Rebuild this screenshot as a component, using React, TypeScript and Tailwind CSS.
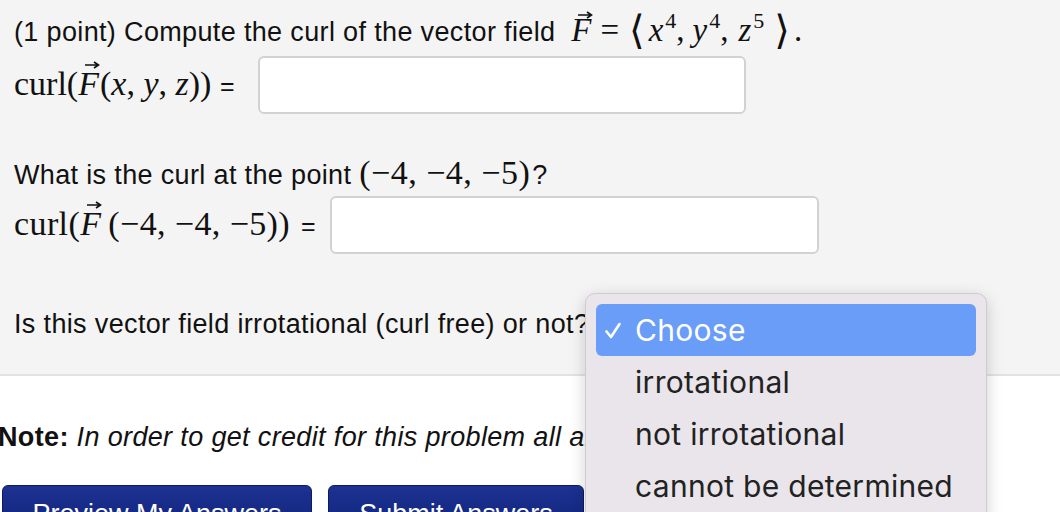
import React from "react";

const serif = "font-['Liberation_Serif','DejaVu_Serif',serif]";
const body = "text-[27px] tracking-[0.35px]";

const VecF = ({ gap = false }: { gap?: boolean }) => (
  <span className={`relative inline-block italic ${gap ? "mr-[7px]" : "mr-[1px]"}`}>
    F
    <svg
      viewBox="0 0 16 8"
      className="absolute left-[6px] top-[-3px] w-[16px] h-[8px]"
      fill="none"
      stroke="#111"
      strokeWidth="1.6"
    >
      <path d="M1 4 H14 M10 1 L14.5 4 L10 7" />
    </svg>
  </span>
);

const Exp = ({ n }: { n: string }) => (
  <span className="relative top-[-13px] inline-block text-[22px] leading-none ml-[2px]">{n}</span>
);

const AnswerBox = ({ width }: { width: string }) => (
  <div className={`${width} h-[58px] rounded-[6px] border-2 border-[#d2d2d2] bg-white`} />
);

const options = ["irrotational", "not irrotational", "cannot be determined"];

export default function App() {
  return (
    <div className="relative w-[1060px] h-[512px] overflow-hidden bg-white text-[#111] font-['Liberation_Sans',Arial,sans-serif]">
      {/* problem body */}
      <div className="bg-[#f4f4f4] border-b-2 border-[#e2e2e2] pl-[14px] pt-[7px] pb-[30px]">
        <div className={`h-[40px] leading-[40px] whitespace-nowrap ${body}`}>
          (1 point) Compute the curl of the vector field{" "}
          <span className={`${serif} text-[33px] tracking-normal leading-none ml-[8px]`}>
            <VecF />
            <span className="ml-[8px] mr-[10px]">=</span>
            <span className="text-[40px] font-['DejaVu_Serif',serif] relative top-[3px] mr-[4px] font-light">⟨</span>
            <span className="italic">x</span>
            <Exp n="4" />
            <span className="mr-[8px]">,</span>
            <span className="italic">y</span>
            <Exp n="4" />
            <span className="mr-[10px]">,</span>
            <span className="italic">z</span>
            <Exp n="5" />
            <span className="text-[40px] font-['DejaVu_Serif',serif] ml-[10px] relative top-[3px] font-light">⟩</span>
            <span className="ml-[4px]">.</span>
          </span>
        </div>

        <div className="flex items-center mt-[9px]">
          <span className={`${serif} text-[34px] w-[244px] leading-[40px] whitespace-nowrap`}>
            curl(<VecF />(<i>x</i>, <i>y</i>, <i>z</i>)){" "}
            <span className="font-['Liberation_Sans',sans-serif] text-[25px]">=</span>
          </span>
          <AnswerBox width="w-[488px]" />
        </div>

        <div className={`mt-[41px] h-[40px] leading-[40px] whitespace-nowrap ${body}`}>
          What is the curl at the point{" "}
          <span className={`${serif} text-[34px] tracking-[0.5px] leading-none`}>(−4, −4, −5)</span>
          <span className="ml-[2px]">?</span>
        </div>

        <div className="flex items-center mt-[1px]">
          <span className={`${serif} text-[34px] w-[316px] leading-[40px] whitespace-nowrap tracking-[0.4px]`}>
            curl(<VecF gap />(−4, −4, −5)){" "}
            <span className="font-['Liberation_Sans',sans-serif] text-[25px] ml-[2px]">=</span>
          </span>
          <AnswerBox width="w-[489px]" />
        </div>

        <div className={`mt-[50px] h-[40px] leading-[40px] whitespace-nowrap ${body}`}>
          Is this vector field irrotational (curl free) or not?
        </div>
      </div>

      {/* footer */}
      <div className="ml-[-2px] whitespace-nowrap">
        <div className={`mt-[41px] h-[40px] leading-[40px] ${body}`}>
          <b>Note:</b> <i>In order to get credit for this problem all answers must be correct.</i>
        </div>
        <div className="mt-[28px] flex gap-[16px] pl-[4px]">
          <button className="w-[310px] h-[52px] rounded-[6px] border border-[#0b1b66] bg-gradient-to-b from-[#1d3292] to-[#0e2279] text-white text-[27px] pt-[5px] leading-[40px]">
            Preview My Answers
          </button>
          <button className="w-[256px] h-[52px] rounded-[6px] border border-[#0b1b66] bg-gradient-to-b from-[#1d3292] to-[#0e2279] text-white text-[27px] pt-[5px] leading-[40px]">
            Submit Answers
          </button>
        </div>
      </div>

      {/* open select menu */}
      <div className="absolute left-[585px] top-[293px] w-[402px] h-[240px] rounded-[10px] border border-[#cfcbd0] bg-[#e9e5ea] shadow-[0_4px_16px_rgba(0,0,0,0.18)] p-[10px] font-['Inter',sans-serif] text-[30px] tracking-[0.3px]">
        <div className="h-[52px] rounded-[6px] bg-[#699df8] text-white flex items-center">
          <svg viewBox="0 0 16 16" className="w-[16px] h-[17px] ml-[9px] mr-[14px]" fill="none" stroke="white" strokeWidth="2.6" strokeLinecap="round" strokeLinejoin="round">
            <path d="M1.5 9 L6 14.5 L14.5 1.5" />
          </svg>
          <span>Choose</span>
        </div>
        {options.map((o) => (
          <div key={o} className="h-[52px] flex items-center pl-[39px] text-[#222]">
            {o}
          </div>
        ))}
      </div>
    </div>
  );
}
